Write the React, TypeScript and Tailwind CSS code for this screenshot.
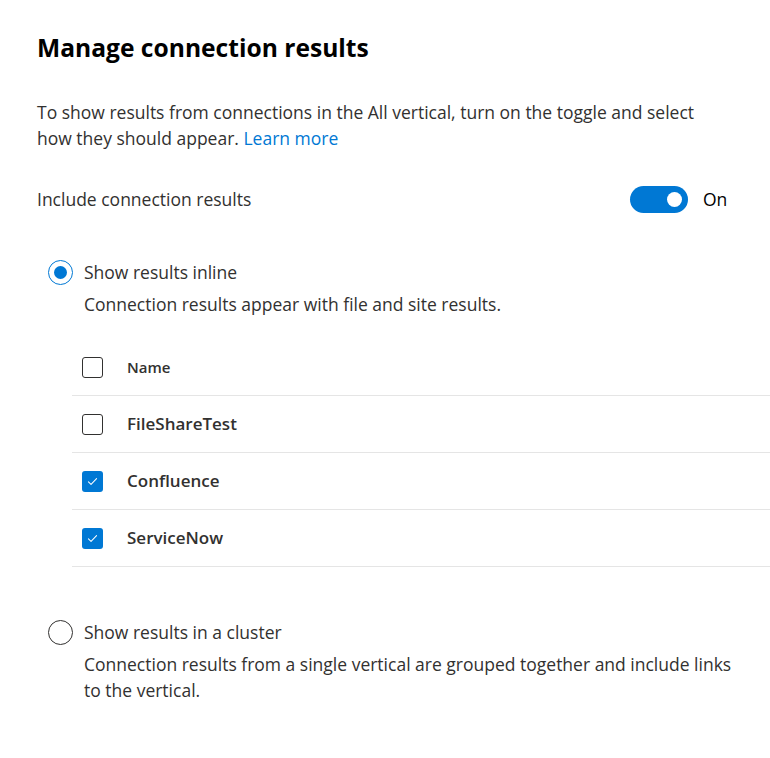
import React from "react";

const font = { fontFamily: '"Segoe UI", "Open Sans", sans-serif' };

function Check({ checked }: { checked: boolean }) {
  return checked ? (
    <div className="w-[21px] h-[21px] rounded-[3px] bg-[#0078d4] flex items-center justify-center">
      <svg width="13" height="13" viewBox="0 0 16 16" fill="none">
        <path d="M3 8.5l3.2 3L13 4.5" stroke="white" strokeWidth="1.3" strokeLinecap="round" strokeLinejoin="round" />
      </svg>
    </div>
  ) : (
    <div className="w-[21px] h-[21px] rounded-[3px] border-[1.5px] border-[#323130] bg-white" />
  );
}

function Radio({ selected }: { selected: boolean }) {
  return (
    <div
      className={`w-[25px] h-[25px] rounded-full border-[1.5px] flex items-center justify-center shrink-0 ${
        selected ? "border-[#0078d4]" : "border-[#323130]"
      }`}
    >
      {selected && <div className="w-[13px] h-[13px] rounded-full bg-[#0078d4]" />}
    </div>
  );
}

function Row({ name, checked }: { name: string; checked: boolean }) {
  return (
    <div className="flex items-center h-[57px] border-b-[1.5px] border-[#e5e5e5]">
      <div className="w-[55px] pl-[10px] flex items-center">
        <Check checked={checked} />
      </div>
      <span className="text-[17px] font-semibold text-[#323130]">{name}</span>
    </div>
  );
}

export default function App() {
  return (
    <div className="w-[770px] h-[758px] bg-white text-[#323130] pl-[37px] pt-[29px]" style={font}>
      <h1 className="text-[24.6px] font-bold text-black leading-[38px]">Manage connection results</h1>
      <p className="mt-[32px] text-[17.5px] leading-[26px] pr-[60px]">
        To show results from connections in the All vertical, turn on the toggle and select how they should appear.{" "}
        <span className="text-[#0078d4]">Learn more</span>
      </p>
      <div className="mt-[35px] mr-[13px] flex items-center h-[27px]">
        <span className="text-[17.5px] flex-1">Include connection results</span>
        <div className="w-[58px] h-[27px] rounded-full bg-[#0078d4] flex items-center justify-end pr-[6px]">
          <div className="w-[15px] h-[15px] rounded-full bg-white" />
        </div>
        <span className="ml-[15px] w-[54px] text-[17.5px] text-black">On</span>
      </div>
      <div className="mt-[46px] pl-[11px]">
        <div className="flex items-center gap-[11px] h-[27px]">
          <Radio selected />
          <span className="text-[17.5px]">Show results inline</span>
        </div>
        <div className="pl-[36px] mt-[5px] text-[17.5px] leading-[26px]">Connection results appear with file and site results.</div>
        <div className="ml-[24px] mt-[22px]">
          <div className="flex items-center h-[57px] border-b-[1.5px] border-[#e5e5e5]">
            <div className="w-[55px] pl-[10px] flex items-center">
              <Check checked={false} />
            </div>
            <span className="text-[15px] font-semibold text-[#323130]">Name</span>
          </div>
          <Row name="FileShareTest" checked={false} />
          <Row name="Confluence" checked />
          <Row name="ServiceNow" checked />
        </div>
        <div className="mt-[52px] flex items-center gap-[11px] h-[27px]">
          <Radio selected={false} />
          <span className="text-[17.5px]">Show results in a cluster</span>
        </div>
        <div className="pl-[36px] mt-[5px] max-w-[700px] text-[17.5px] leading-[26px]">
          Connection results from a single vertical are grouped together and include links to the vertical.
        </div>
      </div>
    </div>
  );
}
